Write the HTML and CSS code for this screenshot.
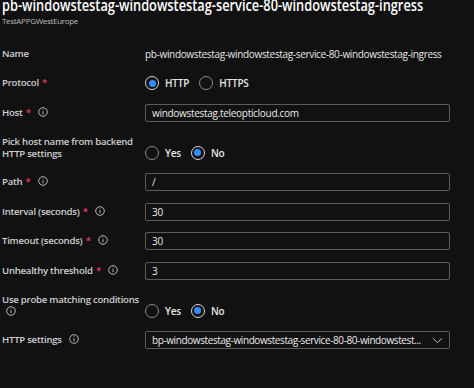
FILE: index.html
```html
<!DOCTYPE html>
<html lang="en">
<head>
	<meta charset="UTF-8">
	<title>Health probe</title>
	<link rel="stylesheet" href="styles.css">
</head>
<body>
    <div class="head">
        <h1 class="title">pb-windowstestag-windowstestag-service-80-windowstestag-ingress</h1>
        <p class="sub">TestAPPGWestEurope</p>
    </div>

    <div class="form">
        <div class="row">
            <div class="label">Name</div>
            <div class="value">pb-windowstestag-windowstestag-service-80-windowstestag-ingress</div>
        </div>

        <div class="row">
            <div class="label">Protocol <span class="req">*</span></div>
            <div class="radios">
                <span class="radio on"></span><span class="opt">HTTP</span>
                <span class="radio"></span><span class="opt">HTTPS</span>
            </div>
        </div>

        <div class="row">
            <div class="label">Host <span class="req">*</span> <svg class="info" viewBox="0 0 10 10"><circle cx="5" cy="5" r="4.3"/><path d="M5 4.3v3M5 2.6v0.8"/></svg></div>
            <div class="field">windowstestag.teleopticloud.com</div>
        </div>

        <div class="row tall">
            <div class="label">Pick host name from backend<br>HTTP settings</div>
            <div class="radios low">
                <span class="radio"></span><span class="opt">Yes</span>
                <span class="radio on"></span><span class="opt">No</span>
            </div>
        </div>

        <div class="row">
            <div class="label">Path <span class="req">*</span> <svg class="info" viewBox="0 0 10 10"><circle cx="5" cy="5" r="4.3"/><path d="M5 4.3v3M5 2.6v0.8"/></svg></div>
            <div class="field">/</div>
        </div>

        <div class="row">
            <div class="label">Interval (seconds) <span class="req">*</span> <svg class="info" viewBox="0 0 10 10"><circle cx="5" cy="5" r="4.3"/><path d="M5 4.3v3M5 2.6v0.8"/></svg></div>
            <div class="field">30</div>
        </div>

        <div class="row">
            <div class="label">Timeout (seconds) <span class="req">*</span> <svg class="info" viewBox="0 0 10 10"><circle cx="5" cy="5" r="4.3"/><path d="M5 4.3v3M5 2.6v0.8"/></svg></div>
            <div class="field">30</div>
        </div>

        <div class="row">
            <div class="label">Unhealthy threshold <span class="req">*</span> <svg class="info" viewBox="0 0 10 10"><circle cx="5" cy="5" r="4.3"/><path d="M5 4.3v3M5 2.6v0.8"/></svg></div>
            <div class="field">3</div>
        </div>

        <div class="row tall">
            <div class="label">Use probe matching conditions<br><svg class="info first" viewBox="0 0 10 10"><circle cx="5" cy="5" r="4.3"/><path d="M5 4.3v3M5 2.6v0.8"/></svg></div>
            <div class="radios low">
                <span class="radio"></span><span class="opt">Yes</span>
                <span class="radio on"></span><span class="opt">No</span>
            </div>
        </div>

        <div class="row">
            <div class="label">HTTP settings <svg class="info" viewBox="0 0 10 10"><circle cx="5" cy="5" r="4.3"/><path d="M5 4.3v3M5 2.6v0.8"/></svg></div>
            <div class="field select">
                <span class="sel_text">bp-windowstestag-windowstestag-service-80-80-windowstest...</span>
                <svg class="chev" viewBox="0 0 12 8"><path d="M1 1.5l5 5 5-5"/></svg>
            </div>
        </div>
    </div>
</body>
</html>
```

FILE: styles.css
```css
body{
	margin: 0;
	padding: 0 0 0 2px;
	background: #111111;
	color: #e6e6e6;
	font-family: "Open Sans", "Noto Sans", sans-serif;
	font-size: 10px;
	overflow: hidden;
}
.head{
	margin-top: -5px;
}
.title{
	margin: 0;
	font-size: 16px;
	font-weight: 600;
	color: #ffffff;
	line-height: 21px;
	white-space: nowrap;
	transform: scaleX(0.8);
	transform-origin: left center;
}
.sub{
	margin: 0;
	font-size: 8px;
	color: #bdbdbd;
	line-height: 10px;
	letter-spacing: -0.3px;
}
.form{
	margin-top: 13px;
}
.row{
	display: grid;
	grid-template-columns: 143px 305px;
	align-items: center;
	height: 29.5px;
}
.row.tall{
	height: 40px;
}
.label{
	font-size: 9.6px;
	font-weight: 600;
	color: #cfcfcf;
	line-height: 12px;
	letter-spacing: -0.25px;
	white-space: nowrap;
}
.req{
	color: #e0405a;
	margin-left: 1px;
}
.info{
	width: 10px;
	height: 10px;
	margin-left: 5px;
	vertical-align: -1px;
	fill: none;
	stroke: #c8c8c8;
	stroke-width: 0.9;
}
.info.first{
	margin-left: 4px;
}
.value{
	color: #e6e6e6;
	letter-spacing: -0.33px;
	white-space: nowrap;
}
.radios{
	display: flex;
	align-items: center;
}
.radios.low{
	padding-top: 10px;
}
.radio{
	width: 12px;
	height: 12px;
	border: 1px solid #8a8a8a;
	border-radius: 50%;
	box-sizing: content-box;
	display: flex;
	align-items: center;
	justify-content: center;
}
.radio.on{
	border-color: #d8d8d8;
}
.radio.on::after{
	content: "";
	width: 7px;
	height: 7px;
	border-radius: 50%;
	background: #2f8fff;
}
.opt{
	font-weight: 600;
	letter-spacing: -0.2px;
	margin: 0 10px 0 6px;
}
.field{
	height: 18px;
	box-sizing: border-box;
	border: 1px solid #5c5c5c;
	border-radius: 2px;
	padding: 0 6px;
	line-height: 16px;
	color: #ececec;
	letter-spacing: -0.3px;
	white-space: nowrap;
}
.select{
	display: flex;
	align-items: center;
	justify-content: space-between;
	padding-right: 6px;
}
.sel_text{
	min-width: 0;
	overflow: hidden;
	letter-spacing: -0.4px;
}
.chev{
	flex: none;
	width: 11px;
	height: 7px;
	margin-left: 4px;
	fill: none;
	stroke: #cfcfcf;
	stroke-width: 1.1;
}
```
